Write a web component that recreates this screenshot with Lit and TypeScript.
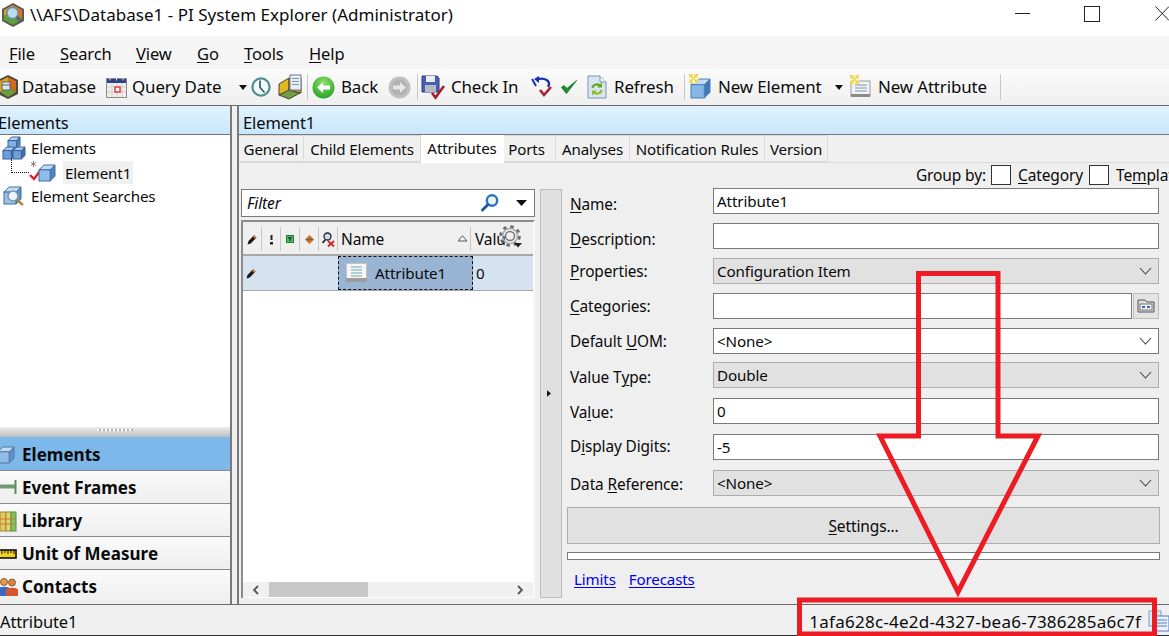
import { LitElement, html, css, svg } from "lit";
import { customElement } from "lit/decorators.js";

const cube = (x: number, y: number, s: number, front = "#8fbce8", top = "#b9d6f2", side = "#5f93cc", line = "#3f6fa6") => svg`
  <path d="M${x} ${y + s * 0.3}L${x + s * 0.3} ${y}H${x + s}L${x + s * 0.7} ${y + s * 0.3}Z" fill=${top} stroke=${line}/>
  <path d="M${x + s * 0.7} ${y + s * 0.3}L${x + s} ${y}V${y + s * 0.7}L${x + s * 0.7} ${y + s}Z" fill=${side} stroke=${line}/>
  <rect x=${x} y=${y + s * 0.3} width=${s * 0.7} height=${s * 0.7} fill=${front} stroke=${line}/>`;

const sparkle = (x: number, y: number) => svg`
  <rect x=${x} y=${y} width="9" height="9" fill="#f7e36a"/>
  <path d="M${x + 4.5} ${y - 1}V${y + 10}M${x - 1} ${y + 4.5}H${x + 10}" stroke="#fff8c8" stroke-width="1.4"/>
  <path d="M${x} ${y}l9 9M${x + 9} ${y}l-9 9" stroke="#d8b93a" stroke-width=".8"/>`;

const I: Record<string, any> = {
  db: html`<svg width="22" height="26" viewBox="0 0 22 26"><path d="M11 1L21 6V20L11 25L1 20V6Z" fill="#50493a"/><path d="M11 3L3 7V18L11 14Z" fill="#d9a71f"/><path d="M11 3L19 7V18L11 14Z" fill="#cf6a22"/><path d="M3 18L11 14L19 18L11 23Z" fill="#689f3f"/><path d="M5 8h8v8H5z" fill="#dfe6ec" stroke="#58626c"/><path d="M5 11h8" stroke="#58626c"/></svg>`,
  cal: html`<svg width="21" height="21" viewBox="0 0 21 21"><rect x=".5" y="1.5" width="20" height="19" fill="#eee" stroke="#8a8a8a"/><rect x="1" y="2" width="19" height="4" fill="#2b3e86"/><path d="M4 .5v3M10.5 .5v3M17 .5v3" stroke="#ddd"/><path d="M1 10h19M1 15h19M6 6v14M11 6v14M16 6v14" stroke="#d5cfc5"/><rect x="9" y="10" width="5" height="5" fill="#fff" stroke="#e43c3c" stroke-width="1.5"/></svg>`,
  caret: html`<svg width="8" height="5" viewBox="0 0 8 5"><path d="M0 0H8L4 5Z" fill="#111"/></svg>`,
  clock: html`<svg width="20" height="22" viewBox="0 0 20 22"><circle cx="10" cy="11" r="8.6" fill="#f4fafa" stroke="#4f8c8c" stroke-width="2.2"/><path d="M9 4.5V11.5L13.5 16.5" fill="none" stroke="#2c5f68" stroke-width="1.7"/></svg>`,
  box: html`<svg width="24" height="26" viewBox="0 0 24 26"><path d="M1 10L11 4V17L1 21Z" fill="#e1b81f" stroke="#4a4230"/><path d="M1 21L11 16L22 19L11 25Z" fill="#6da046" stroke="#4a4230"/><path d="M11 4H23V19L11 16Z" fill="#d0a03c" stroke="#4a4230"/><rect x="12" y="1" width="11" height="15" fill="#e9eef3" stroke="#6b7c90"/><path d="M14 4.5h7M14 7.5h7M14 10.5h7" stroke="#7f93aa"/></svg>`,
  back: html`<svg width="23" height="23" viewBox="0 0 23 23"><defs><radialGradient id="gb" cx=".5" cy=".3" r=".8"><stop offset="0" stop-color="#8fe06a"/><stop offset="1" stop-color="#179a1f"/></radialGradient></defs><circle cx="11.5" cy="11.5" r="11" fill="url(#gb)"/><path d="M5 11.5L11 6V9.5H18V13.5H11V17Z" fill="#fff"/></svg>`,
  fwd: html`<svg width="23" height="23" viewBox="0 0 23 23"><circle cx="11.5" cy="11.5" r="11" fill="#c0c0c0"/><circle cx="11.5" cy="11.5" r="8" fill="#b2b2b2"/><path d="M18 11.5L12 6V9.5H5V13.5H12V17Z" fill="#e6e6e6"/></svg>`,
  save: html`<svg width="24" height="26" viewBox="0 0 24 26"><path d="M1 2H16L18 4V18H1Z" fill="#4a5fb4" stroke="#2e3c86"/><rect x="5" y="2" width="9" height="6" fill="#e8ecf4"/><rect x="4" y="11" width="11" height="7" fill="#b5b9c4"/><path d="M11 19l3.5 4.5L23 12" fill="none" stroke="#a3202a" stroke-width="2.6"/></svg>`,
  undo: html`<svg width="22" height="24" viewBox="0 0 22 24"><path d="M3 4L8 1V8Z" fill="#1c2fb0"/><path d="M6 4.5C13 2 21 6 17 12" fill="none" stroke="#1c2fb0" stroke-width="2.4"/><path d="M1 4L5 11" stroke="#1c2fb0" stroke-width="2"/><path d="M9 15l4 5 7-8" fill="none" stroke="#a52230" stroke-width="2.6"/></svg>`,
  check: html`<svg width="18" height="18" viewBox="0 0 18 18"><path d="M1.5 9.5L6.5 15.5L16.5 2.5L7 10.5L4 7.5Z" fill="#1f8a2e" stroke="#1f8a2e" stroke-linejoin="round"/></svg>`,
  refresh: html`<svg width="20" height="24" viewBox="0 0 20 24"><path d="M1 1H13L19 7V23H1Z" fill="#d9e6f2" stroke="#7a94ad"/><path d="M13 1V7H19" fill="#f4f8fb" stroke="#7a94ad"/><path d="M5.5 13C6 9.5 10 8.5 13 10.5" fill="none" stroke="#63a51c" stroke-width="2.2"/><path d="M15 7.5V12.5H10Z" fill="#63a51c"/><path d="M14.5 15C14 18.5 10 19.5 7 17.5" fill="none" stroke="#8cbd2a" stroke-width="2.2"/><path d="M5 20.5V15.5H10Z" fill="#8cbd2a"/></svg>`,
  newel: html`<svg width="22" height="26" viewBox="0 0 22 26">${cube(2, 5, 19, "#86b7e6", "#c2dcf4", "#3f78b8", "#4c7fb5")}${sparkle(0, 0)}</svg>`,
  newat: html`<svg width="21" height="24" viewBox="0 0 21 24"><rect x="1" y="6" width="19" height="15" fill="#f3f3f3" stroke="#9a9a9a"/><rect x="1" y="19" width="19" height="3" fill="#8b8b8b"/><path d="M5 10h12M5 13h12M5 16h12" stroke="#7c96b4"/>${sparkle(0, 0)}</svg>`,
  stack: html`<svg width="24" height="24" viewBox="0 0 24 24">${cube(6, 1, 12, "#82b1e4", "#b4d2ef", "#4f7fbc", "#3a6298")}${cube(1, 11, 12, "#6d9fdb", "#a8c9ec", "#41709f", "#3a6298")}${cube(11, 11, 12, "#6d9fdb", "#a8c9ec", "#41709f", "#3a6298")}</svg>`,
  elem: html`<svg width="28" height="24" viewBox="0 0 28 24"><path d="M4.5 1v6M2 2.5l5 3M7 2.5l-5 3" stroke="#777" stroke-width=".9"/><path d="M1 15l4 4 6-8" fill="none" stroke="#e21b2c" stroke-width="2.4"/>${cube(10, 5, 16, "#8fbce8", "#c2dcf4", "#4f84c0", "#3f6fa6")}</svg>`,
  search: html`<svg width="24" height="22" viewBox="0 0 24 22">${cube(1, 2, 17, "#9cc0e6", "#c7ddf2", "#5f8fc4", "#3f6fa6")}<circle cx="10" cy="11" r="5" fill="#eaf4fb" stroke="#7d93aa" stroke-width="1.5"/><path d="M14 15l6 5" stroke="#a98a3c" stroke-width="2.4"/></svg>`,
  mag: html`<svg width="20" height="20" viewBox="0 0 20 20"><circle cx="12" cy="7.5" r="5.2" fill="#eef6fc" stroke="#2d74bd" stroke-width="2.4"/><path d="M8 11.5L2.5 17" stroke="#1f5c9e" stroke-width="3" stroke-linecap="round"/></svg>`,
  pencil: html`<svg width="10" height="11" viewBox="0 0 10 11"><path d="M0.5 10.5L1.5 7L7 1.2L9.5 3.5L3.8 9.4Z" fill="#1a1a1a"/><path d="M6.8 1.4L9.4 3.6L8.2 4.8L5.6 2.6Z" fill="#d97a1c"/></svg>`,
  excl: html`<svg width="5" height="11" viewBox="0 0 5 11"><path d="M1.5 1h2v5h-2zM1 8h3v2.5h-3z" fill="#222"/></svg>`,
  t: html`<svg width="8" height="8" viewBox="0 0 8 8"><rect x=".5" y=".5" width="7" height="7" fill="#4cbc62" stroke="#247a36"/><path d="M2 2.2h4v1.1h-1.4v2.7h-1.2v-2.7h-1.4z" fill="#123"/></svg>`,
  diamond: html`<svg width="9" height="9" viewBox="0 0 11 11"><path d="M5.5 0L11 5.5L5.5 11L0 5.5Z" fill="#c9702a"/><path d="M1.5 5.5h8" stroke="#5a6a3a" stroke-width="1.5"/></svg>`,
  magx: html`<svg width="13" height="15" viewBox="0 0 13 15"><circle cx="5.5" cy="4.5" r="3.5" fill="#bfe0f5" stroke="#222" stroke-width="1.3"/><path d="M3 8L.5 11" stroke="#222" stroke-width="1.8"/><path d="M6 9l6 5.5M12 9l-6 5.5" stroke="#d22" stroke-width="1.8"/></svg>`,
  attr: html`<svg width="21" height="20" viewBox="0 0 21 20"><rect x=".5" y=".5" width="20" height="16" fill="#f5f5f5" stroke="#c4c4c4"/><rect x="0" y="15" width="21" height="4" fill="#9c9c9c"/><path d="M5 4h11M5 7h11M5 10h11M5 13h11" stroke="#9cc4c8" stroke-width="1.3"/></svg>`,
  gear: html`<svg width="24" height="24" viewBox="0 0 24 24"><g fill="none"><circle cx="11" cy="11" r="4.5" stroke-width="1.5" stroke="#777"/><circle cx="11" cy="11" r="7.5" stroke-width="1.5" stroke="#aaa"/><circle cx="11" cy="11" r="9.5" stroke-width="2.6" stroke="#6b6b6b" stroke-dasharray="3.5 3.96"/></g><path d="M15 18h8l-4 4.5Z" fill="#222"/></svg>`,
  sort: html`<svg width="11" height="7" viewBox="0 0 11 7"><path d="M5.5 .8L10 6H1Z" fill="#f4f4f4" stroke="#555"/></svg>`,
  chev: html`<svg width="13" height="8" viewBox="0 0 13 8"><path d="M1 1L6.5 7L12 1" fill="none" stroke="#444" stroke-width="1.1"/></svg>`,
  folder: html`<svg width="20" height="18" viewBox="0 0 20 18"><path d="M2 3H9L11 5H18V15H2Z" fill="#ddd" stroke="#555"/><rect x="4" y="7" width="12" height="6" fill="#f2f2f2" stroke="#777"/><rect x="6" y="9" width="3" height="2" fill="#3a68b8"/><rect x="11" y="9" width="3" height="2" fill="#3a68b8"/></svg>`,
  tri: html`<svg width="4" height="7" viewBox="0 0 5 8"><path d="M0 0L5 4L0 8Z" fill="#111"/></svg>`,
  left: html`<svg width="8" height="10" viewBox="0 0 8 10"><path d="M6 1L2 5L6 9" fill="none" stroke="#555" stroke-width="1.8"/></svg>`,
  right: html`<svg width="8" height="10" viewBox="0 0 8 10"><path d="M2 1L6 5L2 9" fill="none" stroke="#555" stroke-width="1.8"/></svg>`,
  copy: html`<svg width="21" height="22" viewBox="0 0 21 22"><rect x="1" y="1" width="12" height="15" fill="#dbe8f6" stroke="#7f9cc4"/><rect x="6" y="6" width="15" height="15" fill="#eaf2fb" stroke="#4f7fc0"/><path d="M8 10h11M8 13h11M8 16h11" stroke="#4f7fc0"/></svg>`,
  navEl: html`<svg width="20" height="20" viewBox="0 0 20 20">${cube(0, 2, 16, "#8fbce8", "#c2dcf4", "#5f93cc", "#54779c")}</svg>`,
  navEv: html`<svg width="20" height="18" viewBox="0 0 20 18"><path d="M0 7.5H17" stroke="#6f9c6f" stroke-width="4"/><path d="M17.5 1V15" stroke="#5d8d5d" stroke-width="2"/></svg>`,
  navLib: html`<svg width="20" height="22" viewBox="0 0 20 22"><rect x="2" y="2" width="6" height="19" fill="#e4c95c" stroke="#998a40"/><rect x="8" y="2" width="5" height="19" fill="#e6d46c" stroke="#998a40"/><rect x="13" y="2" width="5" height="19" fill="#84c45c" stroke="#5e8e40"/><path d="M2 9h16M2 14h16" stroke="#c5793c"/></svg>`,
  navUom: html`<svg width="20" height="12" viewBox="0 0 20 12"><rect x="1" y="2" width="17" height="8" fill="#f2d02a" stroke="#111" stroke-width="1.6"/><path d="M4 2v4M7 2v3M10 2v4M13 2v3M16 2v4" stroke="#111"/></svg>`,
  navCon: html`<svg width="20" height="20" viewBox="0 0 20 20"><circle cx="6" cy="5" r="3.5" fill="#e79a4a" stroke="#744a20" stroke-width=".8"/><path d="M0 19V12C0 9 12 9 12 12V19Z" fill="#3a68c4"/><circle cx="14" cy="5.5" r="3.5" fill="#d8833c" stroke="#744a20" stroke-width=".8"/><path d="M8 19V13C8 10 20 10 20 13V19Z" fill="#d4582c"/></svg>`,
};

type Tb = { w: number; icon?: string; text?: string; sep?: boolean; tw?: number };
const toolbar: Tb[] = [
  { w: 109, icon: "db", text: "Database", tw: 25 },
  { w: 133, icon: "cal", text: "Query Date", tw: 26 },
  { w: 12, icon: "caret" },
  { w: 27, icon: "clock" },
  { w: 29, icon: "box" },
  { w: 5, sep: true },
  { w: 76, icon: "back", text: "Back", tw: 29 },
  { w: 29, icon: "fwd" },
  { w: 4, sep: true },
  { w: 110, icon: "save", text: "Check In", tw: 30 },
  { w: 29, icon: "undo" },
  { w: 27, icon: "check" },
  { w: 97, icon: "refresh", text: "Refresh", tw: 27 },
  { w: 5, sep: true },
  { w: 146, icon: "newel", text: "New Element", tw: 29 },
  { w: 15, icon: "caret" },
  { w: 150, icon: "newat", text: "New Attribute", tw: 28 },
  { w: 2, sep: true },
];
const iconW: Record<string, number> = { db: 22, cal: 21, back: 23, save: 24, refresh: 20, newel: 22, newat: 21 };

const tabs: [string, number][] = [["General", 65], ["Child Elements", 117], ["Attributes", 83], ["Ports", 52], ["Analyses", 74], ["Notification Rules", 135], ["Version", 63]];
const nav: [string, string][] = [["navEl", "Elements"], ["navEv", "Event Frames"], ["navLib", "Library"], ["navUom", "Unit of Measure"], ["navCon", "Contacts"]];
const u = (a: string, b: string, c: string) => html`${a}<u>${b}</u>${c}`;
type F = { l: any; off: number; kind: "input" | "gray" | "white" | "cat"; v: string };
const fields: F[] = [
  { l: u("", "N", "ame:"), off: 4, kind: "input", v: "Attribute1" },
  { l: u("", "D", "escription:"), off: 4, kind: "input", v: "" },
  { l: u("", "P", "roperties:"), off: 1, kind: "gray", v: "Configuration Item" },
  { l: u("", "C", "ategories:"), off: 1, kind: "cat", v: "" },
  { l: u("Default ", "U", "OM:"), off: 1, kind: "white", v: "<None>" },
  { l: u("Value T", "y", "pe:"), off: 3, kind: "gray", v: "Double" },
  { l: u("Va", "l", "ue:"), off: 2, kind: "input", v: "0" },
  { l: u("D", "i", "splay Digits:"), off: 0, kind: "input", v: "-5" },
  { l: u("Data ", "R", "eference:"), off: 2, kind: "gray", v: "<None>" },
];

@customElement("app-root")
export class AppRoot extends LitElement {
  static styles = css`
    :host { display: block; width: 1169px; height: 636px; overflow: hidden; position: relative; background: #f0f0f0; color: #0a0a0a; font-family: "Noto Sans", sans-serif; font-size: 15.5px; line-height: 20px; letter-spacing: -.12px; }
    svg { display: block; flex: none; }
    u { text-underline-offset: 2px; text-decoration-thickness: 1px; }
    .root { display: flex; flex-direction: column; height: 636px; }
    .title { height: 36px; flex: none; background: #fff; display: flex; align-items: center; padding-left: 1px; box-sizing: border-box; }
    .title span { margin-left: 5px; font-size: 17px; letter-spacing: .02px; margin-top: -6px; }
    .title svg.app { margin-top: -6px; }
    .winbtns { margin-left: auto; display: flex; align-items: flex-start; height: 36px; }
    .win-min { width: 15px; height: 1px; background: #222; margin-top: 13px; margin-right: 54px; }
    .win-max { width: 14px; height: 14px; border: 1px solid #222; margin-top: 6px; margin-right: 55px; }
    .win-x { width: 14px; margin-top: 6px; }
    .menu { height: 33px; flex: none; background: #f5f5f5; display: flex; align-items: center; font-size: 16.5px; padding-top: 3px; box-sizing: border-box; }
    .menu span { flex: none; }
    .mf { margin-left: 9px; width: 51px; } .ms { width: 76px; } .mv { width: 61px; } .mg { width: 47px; } .mt { width: 65px; }
    .toolbar { height: 36px; flex: none; background: linear-gradient(#fbfbfb, #efefef); display: flex; align-items: center; margin-left: -3px; font-size: 16.9px; }
    .tb { flex: none; display: flex; align-items: center; height: 36px; }
    .tb .lbl { white-space: nowrap; }
    .sep { flex: none; width: 1px; height: 26px; background: #c6c6c6; }
    .main { flex: none; display: flex; border-top: 1px solid #6a6a6a; height: 498px; gap: 5px; border-bottom: 1px solid #6a6a6a; }
    .lp { width: 232px; flex: none; border-right: 2px solid #7a7a7a; box-sizing: border-box; display: flex; flex-direction: column; background: #fff; }
    .rp { flex: 1; min-width: 0; border-left: 2px solid #7a7a7a; display: flex; flex-direction: column; background: #efefef; }
    .hdr { height: 29px; box-sizing: border-box; padding-top: 6px; flex: none; background: linear-gradient(#e1f3fe, #c8e6fb); border-bottom: 1px solid #777; display: flex; align-items: center; font-size: 16.5px; }
    .lp .hdr span { margin-left: -2px; }
    .rp .hdr span { margin-left: 4px; }
    .tree { flex: 1; background: #fff; display: flex; flex-direction: column; padding-top: 1px; font-size: 15.2px; }
    .tr { height: 24px; flex: none; display: flex; align-items: center; white-space: nowrap; }
    .t1 svg { margin-left: 2px; } .t1 span { margin-left: 5px; }
    .t2 .dots { width: 17px; height: 13px; border-left: 1px dotted #111; border-bottom: 1px dotted #111; margin-left: 11px; margin-top: -13px; flex: none; }
    .sel { background: #f0f0f0; margin-left: 6px; padding: 0 2px; height: 23px; line-height: 24px; }
    .t3 svg { margin-left: 3px; } .t3 span { margin-left: 4px; }
    .split { height: 10px; flex: none; background: linear-gradient(#ededed, #bdbdbd); display: flex; justify-content: center; align-items: flex-start; }
    .split i { width: 36px; height: 2px; margin-top: 2px; background: repeating-linear-gradient(90deg, #fff 0 2px, #b0b0b0 2px 4px); }
    .nv { height: 33px; flex: none; box-sizing: border-box; display: flex; align-items: center; padding-top: 2px; border-top: 1px solid #8a8a8a; background: linear-gradient(#fafafa, #eeeeee); font-weight: 700; font-size: 17px; letter-spacing: .02px; }
    .nv:last-child { height: 35px; padding-bottom: 2px; }
    .nv.on { background: #7cb9ea; border-top: none; }
    .nv .nic { width: 22px; flex: none; margin-left: -2px; margin-right: 2px; }
    .tabs { height: 27px; flex: none; display: flex; border-bottom: 1px solid #dadada; background: #f0f0f0; font-size: 15.1px; }
    .tab { box-sizing: border-box; flex: none; height: 27px; border: 1px solid #dadada; border-left: none; display: flex; align-items: center; justify-content: center; white-space: nowrap; padding-top: 1px; }
    .tab.on { background: #fff; border-color: #fff; padding-top: 0; padding-bottom: 3px; height: 28px; }
    .tab.ports { padding-right: 6px; }
    .grp { height: 26px; flex: none; display: flex; align-items: center; white-space: nowrap; padding-left: 675px; padding-bottom: 2px; box-sizing: border-box; overflow: hidden; }
    .cb { width: 20px; height: 20px; box-sizing: border-box; background: #fff; border: 1px solid #333; flex: none; }
    .grp .gl { margin-right: 5px; width: 72px; text-align: right; flex: none; }
    .grp .c1 { margin-left: 7px; margin-right: 7px; flex: none; width: 64px; }
    .grp .c2 { margin-left: 7px; flex: none; }
    .cols { display: grid; grid-template-columns: 294px 22px 598px; column-gap: 5px; padding-left: 2px; height: 409px; flex: none; }
    .lst { display: flex; flex-direction: column; gap: 3px; height: 409px; min-width: 0; }
    .filter { box-sizing: border-box; height: 28px; flex: none; background: #fff; border: 1px solid #7a7a7a; display: flex; align-items: center; font-style: italic; padding-left: 5px; }
    .filter .mg2 { margin-left: auto; margin-right: 16px; }
    .filter .fc { margin-right: 7px; }
    .grid { flex: 1; min-height: 0; box-sizing: border-box; border-top: 2px solid #8c8c8c; border-left: 2px solid #8c8c8c; border-right: 2px solid #f8f8f8; background: #fff; display: flex; flex-direction: column; position: relative; }
    .gh { height: 32px; flex: none; display: grid; grid-template-columns: 19px 19px 19px 19px 19px 133px 1fr; background: #efefef; border-bottom: 2px solid #a8a8a8; }
    .gc { display: flex; align-items: center; justify-content: center; border-right: 1px solid #c8c8c8; margin: 5px 0 3px; }
    .gname { justify-content: flex-start; padding-left: 3px; }
    .gname svg { margin-left: auto; margin-right: 2px; margin-top: -2px; }
    .gval { justify-content: flex-start; border: none; padding-left: 4px; overflow: hidden; }
    .gear { position: absolute; left: 256px; top: 3px; }
    .row { height: 35px; box-sizing: border-box; flex: none; display: grid; grid-template-columns: 95px 135px 1fr; background: #d5e3f1; border-bottom: 1px solid #a8a8a8; align-items: stretch; font-size: 15.2px; }
    .row .p { display: flex; align-items: center; padding-left: 3px; }
    .row .nm { background: #9ab5d3; outline: 1px dashed #111; outline-offset: -1px; display: flex; align-items: center; padding-left: 8px; gap: 8px; }
    .row .vl { display: flex; align-items: center; padding-left: 3px; }
    .fill { flex: 1; }
    .hs { height: 15px; flex: none; margin-bottom: 1px; background: #f0f0f0; display: flex; align-items: center; padding: 0 9px; }
    .hs .th { width: 99px; height: 15px; background: #c8c8c8; margin-left: 9px; }
    .hs .rgt { margin-left: auto; }
    .gsplit { box-sizing: border-box; height: 409px; background: #e0e0e0; border: 1px solid #bcbcbc; display: flex; align-items: center; justify-content: center; padding-right: 4px; }
    .form { display: flex; flex-direction: column; height: 409px; width: 593px; }
    .fgrid { display: grid; grid-template-columns: 146px 446px; grid-template-rows: 35px 35px 35px 35px 34px 36px 36px 36px; height: 319px; flex: none; align-items: start; margin-top: -1px; font-size: 15.4px; }
    .fl { padding-left: 3px; height: 26px; display: flex; align-items: center; white-space: pre; }
    .fv { box-sizing: border-box; height: 26px; border: 1px solid #7a7a7a; background: #fff; display: flex; align-items: center; padding: 0 6px 0 3px; white-space: nowrap; font-size: 15.2px; }
    .fv.gray { background: #e1e1e1; border-color: #adadad; }
    .fv svg { margin-left: auto; }
    .catw { display: flex; gap: 1px; }
    .catw .fv { flex: 1; }
    .fold { box-sizing: border-box; width: 26px; height: 26px; background: #e4e4e4; border: 1px solid #bdbdbd; display: flex; align-items: center; justify-content: center; flex: none; }
    .settings { height: 37px; box-sizing: border-box; flex: none; background: #e1e1e1; border: 1px solid #adadad; display: flex; align-items: center; justify-content: center; }
    .bar { height: 8px; margin-top: 8px; box-sizing: border-box; flex: none; background: #fff; border: 1px solid #7a7a7a; }
    .links { display: flex; gap: 13px; margin-top: 9px; padding-left: 7px; font-size: 15.1px; }
    .links a { color: #0000ee; text-decoration: underline; text-underline-offset: 2px; }
    .status { flex: 1; display: flex; align-items: center; border-bottom: 1px solid #333; background: #f0f0f0; padding-top: 3px; box-sizing: border-box; font-size: 16.5px; }
    .status .guid { margin-left: auto; margin-right: 7px; white-space: nowrap; font-size: 17px; letter-spacing: .25px; }
    .status svg { margin-top: -2px; }
    .overlay { position: absolute; inset: 0; pointer-events: none; }
  `;

  renderField(f: F) {
    if (f.kind === "cat") {
      return html`<div class="catw"><div class="fv"></div><div class="fold">${I.folder}</div></div>`;
    }
    const cls = "fv" + (f.kind === "gray" ? " gray" : "");
    const chev = f.kind === "gray" || f.kind === "white";
    return html`<div class=${cls}>${f.v}${chev ? I.chev : ""}</div>`;
  }

  render() {
    return html`<div class="root">
      <div class="title">
        <svg class="app" width="24" height="26" viewBox="0 0 24 26"><path d="M12 1L23 7V19L12 25L1 19V7Z" fill="#5b5b4f"/><path d="M12 3L3 8V14L12 10Z" fill="#d8a21e"/><path d="M12 3L21 8V17L12 10Z" fill="#e0711f"/><path d="M3 14L12 10L21 17L12 23L3 18Z" fill="#5fa03c"/><circle cx="11.5" cy="11" r="5.6" fill="#bcdcf0" stroke="#6d8ea8" stroke-width="1.6"/><path d="M15.5 15l5 4.5" stroke="#55606a" stroke-width="2.4"/></svg>
        <span>\\\\AFS\\Database1 - PI System Explorer (Administrator)</span>
        <div class="winbtns">
          <div class="win-min"></div><div class="win-max"></div>
          <svg class="win-x" width="14" height="15" viewBox="0 0 14 15"><path d="M.5 .5L14 14.5M.5 14.5L14 .5" stroke="#222" fill="none"/></svg>
        </div>
      </div>
      <div class="menu">
        <span class="mf"><u>F</u>ile</span><span class="ms"><u>S</u>earch</span><span class="mv"><u>V</u>iew</span><span class="mg"><u>G</u>o</span><span class="mt"><u>T</u>ools</span><span><u>H</u>elp</span>
      </div>
      <div class="toolbar">
        ${toolbar.map((t) => t.sep
          ? html`<div class="tb" style="width:${t.w}px"><div class="sep"></div></div>`
          : html`<div class="tb" style="width:${t.w}px">
              ${I[t.icon!]}${t.text ? html`<span class="lbl" style="margin-left:${t.tw! - (iconW[t.icon!] ?? 0)}px">${t.text}</span>` : ""}
            </div>`)}
      </div>
      <div class="main">
        <div class="lp">
          <div class="hdr"><span>Elements</span></div>
          <div class="tree">
            <div class="tr t1">${I.stack}<span>Elements</span></div>
            <div class="tr t2"><div class="dots"></div>${I.elem}<span class="sel">Element1</span></div>
            <div class="tr t3">${I.search}<span>Element Searches</span></div>
          </div>
          <div class="split"><i></i></div>
          ${nav.map(([ic, t], i) => html`<div class="nv ${i === 0 ? "on" : ""}"><span class="nic">${I[ic]}</span>${t}</div>`)}
        </div>
        <div class="rp">
          <div class="hdr"><span>Element1</span></div>
          <div class="tabs">
            ${tabs.map(([t, w]) => html`<div class="tab ${t === "Attributes" ? "on" : ""} ${t === "Ports" ? "ports" : ""}" style="width:${w}px">${t}</div>`)}
          </div>
          <div class="grp">
            <span class="gl">Group by:</span><div class="cb"></div>
            <span class="c1"><u>C</u>ategory</span><div class="cb"></div>
            <span class="c2">Te<u>m</u>plate</span>
          </div>
          <div class="cols">
            <div class="lst">
              <div class="filter">Filter<span class="mg2">${I.mag}</span><span class="fc"><svg width="11" height="6" viewBox="0 0 11 6"><path d="M0 0H11L5.5 6Z" fill="#111"/></svg></span></div>
              <div class="grid">
                <div class="gh">
                  <div class="gc">${I.pencil}</div><div class="gc">${I.excl}</div><div class="gc">${I.t}</div><div class="gc">${I.diamond}</div><div class="gc">${I.magx}</div>
                  <div class="gc gname">Name${I.sort}</div><div class="gc gval">Valu</div>
                </div>
                <span class="gear">${I.gear}</span>
                <div class="row">
                  <div class="p">${I.pencil}</div>
                  <div class="nm">${I.attr}<span>Attribute1</span></div>
                  <div class="vl">0</div>
                </div>
                <div class="fill"></div>
                <div class="hs">${I.left}<div class="th"></div><span class="rgt">${I.right}</span></div>
              </div>
            </div>
            <div class="gsplit">${I.tri}</div>
            <div class="form">
              <div class="fgrid">
                ${fields.map((f) => html`<div class="fl" style="margin-top:${f.off}px">${f.l}</div>${this.renderField(f)}`)}
              </div>
              <div class="settings"><span><u>S</u>ettings...</span></div>
              <div class="bar"></div>
              <div class="links"><a>Limits</a><a>Forecasts</a></div>
            </div>
          </div>
        </div>
      </div>
      <div class="status"><span>Attribute1</span><span class="guid">1afa628c-4e2d-4327-bea6-7386285a6c7f</span>${I.copy}</div>
    </div>
    <svg class="overlay" width="1169" height="636" viewBox="0 0 1169 636">
      <path d="M918.5 273.5H998V436H1038L958 592L880 436H918.5Z" fill="none" stroke="#ed1c24" stroke-width="5" stroke-linejoin="miter"/>
      <rect x="799.5" y="600" width="355" height="34" fill="none" stroke="#ed1c24" stroke-width="5"/>
    </svg>`;
  }
}
